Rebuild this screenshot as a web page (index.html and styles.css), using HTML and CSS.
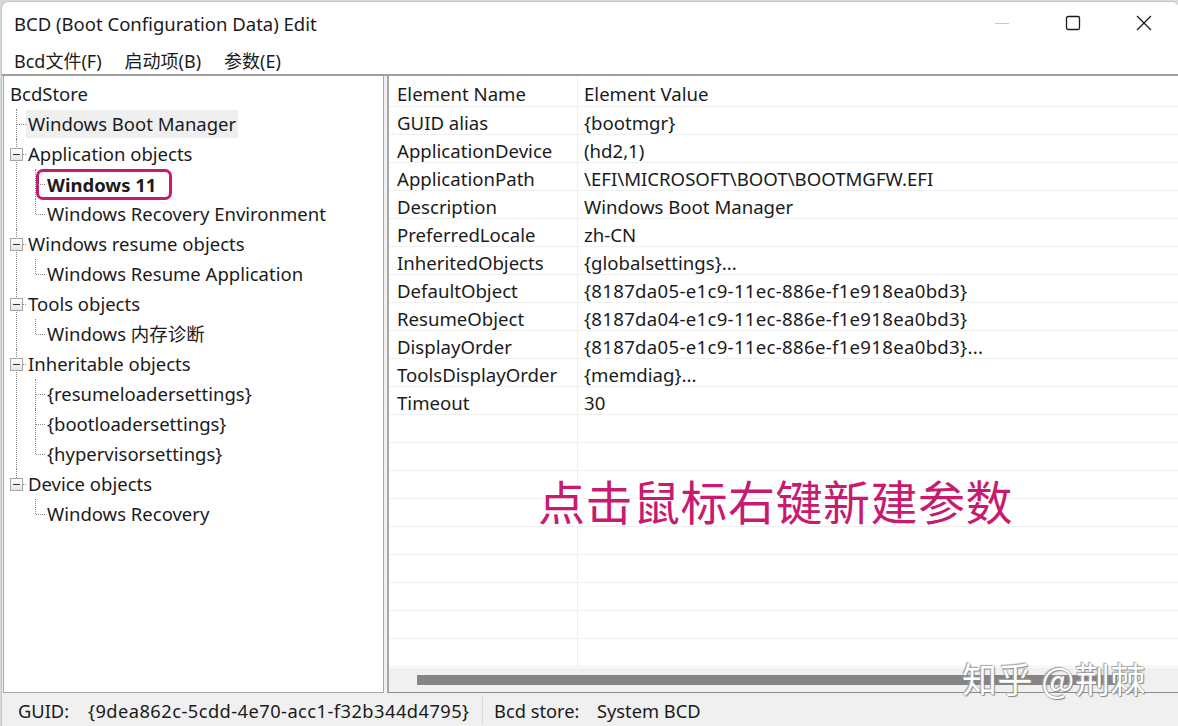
FILE: index.html
```html
<!DOCTYPE html>
<html lang="zh-CN">
<head>
<meta charset="utf-8">
<title>BCD Edit</title>
<link rel="stylesheet" href="styles.css">
</head>
<body>
<div class="window">
  <div class="titlebar">
    <div class="title">BCD (Boot Configuration Data) Edit</div>
    <div class="controls">
      <span class="ctl"><svg width="16" height="16" viewBox="0 0 16 16"><path d="M1 8.5h14" stroke="#c8c8c8" stroke-width="1"/></svg></span>
      <span class="ctl"><svg width="16" height="16" viewBox="0 0 16 16"><rect x="1.5" y="1.5" width="13" height="13" rx="1.5" fill="none" stroke="#1a1a1a" stroke-width="1.3"/></svg></span>
      <span class="ctl"><svg width="16" height="16" viewBox="0 0 16 16"><path d="M1 1L15 15M15 1L1 15" stroke="#1a1a1a" stroke-width="1.3"/></svg></span>
    </div>
  </div>
  <div class="menubar">
    <span class="menu">Bcd文件(F)</span>
    <span class="menu">启动项(B)</span>
    <span class="menu">参数(E)</span>
  </div>
  <div class="main">
    <div class="pane left">
      <div class="tree">
        <div class="root"><span class="label">BcdStore</span></div>
        <ul class="l1">
          <li><span class="label sel">Windows Boot Manager</span></li>
          <li><span class="box"></span><span class="label">Application objects</span>
            <ul class="l2">
              <li><span class="label w11">Windows 11</span></li>
              <li><span class="label">Windows Recovery Environment</span></li>
            </ul>
          </li>
          <li><span class="box"></span><span class="label">Windows resume objects</span>
            <ul class="l2">
              <li><span class="label">Windows Resume Application</span></li>
            </ul>
          </li>
          <li><span class="box"></span><span class="label">Tools objects</span>
            <ul class="l2">
              <li><span class="label">Windows 内存诊断</span></li>
            </ul>
          </li>
          <li><span class="box"></span><span class="label">Inheritable objects</span>
            <ul class="l2">
              <li><span class="label">{resumeloadersettings}</span></li>
              <li><span class="label">{bootloadersettings}</span></li>
              <li><span class="label">{hypervisorsettings}</span></li>
            </ul>
          </li>
          <li><span class="box"></span><span class="label">Device objects</span>
            <ul class="l2">
              <li><span class="label">Windows Recovery</span></li>
            </ul>
          </li>
        </ul>
      </div>
    </div>
    <div class="pane right">
      <div class="grid">
        <div class="row head"><div class="c1">Element Name</div><div class="c2">Element Value</div></div>
        <div class="row"><div class="c1">GUID alias</div><div class="c2">{bootmgr}</div></div>
        <div class="row"><div class="c1">ApplicationDevice</div><div class="c2">(hd2,1)</div></div>
        <div class="row"><div class="c1">ApplicationPath</div><div class="c2">\EFI\MICROSOFT\BOOT\BOOTMGFW.EFI</div></div>
        <div class="row"><div class="c1">Description</div><div class="c2">Windows Boot Manager</div></div>
        <div class="row"><div class="c1">PreferredLocale</div><div class="c2">zh-CN</div></div>
        <div class="row"><div class="c1">InheritedObjects</div><div class="c2">{globalsettings}...</div></div>
        <div class="row"><div class="c1">DefaultObject</div><div class="c2 num">{8187da05-e1c9-11ec-886e-f1e918ea0bd3}</div></div>
        <div class="row"><div class="c1">ResumeObject</div><div class="c2 num">{8187da04-e1c9-11ec-886e-f1e918ea0bd3}</div></div>
        <div class="row"><div class="c1">DisplayOrder</div><div class="c2 num">{8187da05-e1c9-11ec-886e-f1e918ea0bd3}...</div></div>
        <div class="row"><div class="c1">ToolsDisplayOrder</div><div class="c2">{memdiag}...</div></div>
        <div class="row"><div class="c1">Timeout</div><div class="c2">30</div></div>
        <div class="row"><div class="c1"></div><div class="c2"></div></div>
        <div class="row"><div class="c1"></div><div class="c2"></div></div>
        <div class="row"><div class="c1"></div><div class="c2"></div></div>
        <div class="row"><div class="c1"></div><div class="c2"></div></div>
        <div class="row"><div class="c1"></div><div class="c2"></div></div>
        <div class="row"><div class="c1"></div><div class="c2"></div></div>
        <div class="row"><div class="c1"></div><div class="c2"></div></div>
        <div class="row"><div class="c1"></div><div class="c2"></div></div>
        <div class="row last"><div class="c1"></div><div class="c2"></div></div>
      </div>
      <div class="hscroll"><div class="thumb"></div></div>
      <div class="annot">点击鼠标右键新建参数</div>
    </div>
  </div>
  <div class="statusbar">
    <span class="st-label">GUID:</span>
    <span class="st-guid">{9dea862c-5cdd-4e70-acc1-f32b344d4795}</span>
    <span class="st-sep"></span>
    <span class="st-label2">Bcd store:</span>
    <span class="st-val">System BCD</span>
  </div>
  <div class="watermark">知乎 @荆棘</div>
</div>
</body>
</html>
```
FILE: styles.css
```css
* { box-sizing: border-box; }
html, body { margin: 0; padding: 0; }
body {
  width: 1178px;
  height: 726px;
  overflow: hidden;
  background: #d9d9d9;
  font-family: "Noto Sans", "Noto Sans CJK SC", sans-serif;
  color: #1b1b1b;
}
.window {
  position: relative;
  width: 1178px;
  height: 726px;
  margin-left: 1px;
  margin-top: 1px;
  background: #f0f0f0;
  border-top-left-radius: 8px;
  border-top-right-radius: 8px;
  border-top: 1px solid #c4c4c4;
  border-left: 1px solid #c4c4c4;
  display: flex;
  flex-direction: column;
  overflow: hidden;
}
.titlebar {
  height: 42px;
  flex: none;
  background: #fff;
  display: flex;
  align-items: center;
  padding-left: 12px;
}
.title {
  font-size: 18.5px;
  flex: 1;
  padding-top: 1px;
}
.controls {
  display: flex;
  align-items: center;
  padding-right: 27px;
  gap: 55px;
}
.ctl { display: flex; width: 16px; height: 16px; }
.menubar {
  height: 32px;
  flex: none;
  background: #fff;
  display: flex;
  align-items: center;
  padding: 3px 0 0 12px;
  gap: 23px;
  font-size: 18px;
  border-bottom: 2px solid #a0a0a0;
}
.menu { line-height: 24px; }
.main {
  flex: 1;
  display: flex;
  gap: 3px;
  min-height: 0;
  background: #f0f0f0;
  padding-left: 1px;
}
.pane {
  background: #fff;
  position: relative;
  overflow: hidden;
}
.left {
  width: 381px;
  flex: none;
  border-left: 1px solid #a8a8a8;
  border-right: 1px solid #a8a8a8;
  border-bottom: 1px solid #a8a8a8;
}
.right {
  flex: 1;
  border-left: 2px solid #a8a8a8;
  border-bottom: 1px solid #8c8c8c;
  display: flex;
  flex-direction: column;
}
/* tree */
.tree {
  padding-top: 3px;
  font-size: 18.5px;
}
.label {
  display: inline-block;
  height: 28px;
  line-height: 28px;
  margin: 1px 0;
  padding: 0 2px;
  white-space: nowrap;
  vertical-align: top;
}
.root { padding-left: 4px; height: 30px; }
.sel { background: #efefef; }
ul.l1, ul.l2 { list-style: none; margin: 0; padding: 0; }
ul.l1 > li { position: relative; padding-left: 22px; }
ul.l1 > li::before {
  content: "";
  position: absolute;
  left: 12px;
  top: 0;
  bottom: 0;
  border-left: 1px dotted #8a8a8a;
}
ul.l1 > li:last-child::before { bottom: auto; height: 15px; }
ul.l1 > li::after {
  content: "";
  position: absolute;
  left: 13px;
  top: 15px;
  width: 9px;
  border-top: 1px dotted #8a8a8a;
}
ul.l2 > li { position: relative; padding-left: 19px; }
ul.l2 > li::before {
  content: "";
  position: absolute;
  left: 9px;
  top: 0;
  bottom: 0;
  border-left: 1px dotted #8a8a8a;
}
ul.l2 > li:last-child::before { bottom: auto; height: 15px; }
ul.l2 > li::after {
  content: "";
  position: absolute;
  left: 10px;
  top: 15px;
  width: 9px;
  border-top: 1px dotted #8a8a8a;
}
.box {
  position: absolute;
  left: 6px;
  top: 9px;
  width: 13px;
  height: 13px;
  border: 1px solid #a5a5a5;
  background: linear-gradient(#ffffff, #e4e4e4);
  z-index: 1;
}
.box::after {
  content: "";
  position: absolute;
  left: 2px;
  right: 2px;
  top: 5px;
  border-top: 1px solid #333;
}
.w11 {
  font-weight: bold;
  border: 3px solid #c81a6f;
  border-radius: 7px;
  height: 31px;
  line-height: 25px;
  margin: 0 0 -1px -9px;
  padding: 0 13px 0 8px;
}
/* grid */
.grid {
  flex: 1;
  font-size: 18.6px;
  overflow: hidden;
}
.row {
  display: flex;
  height: 28px;
  padding-top: 4px;
  line-height: 24px;
  border-bottom: 1px solid #f0f0f0;
}
.row.head { height: 31px; padding-top: 6px; }
.c1 {
  width: 189px;
  flex: none;
  padding-left: 8px;
  white-space: nowrap;
  position: relative;
}
.c1::after {
  content: "";
  position: absolute;
  right: 0;
  top: -6px;
  bottom: -1px;
  border-right: 1px solid #f0f0f0;
}
.c2 {
  flex: 1;
  padding-left: 6px;
  white-space: nowrap;
}
.num { letter-spacing: 0.3px; }
.hscroll {
  height: 24px;
  flex: none;
  background: #f0f0f0;
  padding: 7px 0 0 28px;
}
.thumb {
  width: 700px;
  height: 10px;
  background: #858585;
}
.annot {
  position: absolute;
  left: 149px;
  top: 396px;
  font-size: 47px;
  line-height: 56px;
  letter-spacing: 0.5px;
  color: #c81a6f;
  font-family: "Noto Sans CJK SC", sans-serif;
  white-space: nowrap;
}
.watermark {
  position: absolute;
  left: 960px;
  top: 654px;
  font-size: 35px;
  line-height: 44px;
  letter-spacing: 0.5px;
  color: #ffffff;
  font-family: "Noto Sans CJK SC", sans-serif;
  text-shadow: 0 0 1px #777, 1px 1px 1px #888, -1px -1px 1px #aaa;
  white-space: nowrap;
}
/* status */
.statusbar {
  height: 34px;
  flex: none;
  background: #f0f0f0;
  display: flex;
  align-items: center;
  font-size: 18.3px;
  padding-left: 16px;
}
.st-label { width: 70px; }
.st-guid { width: 394px; letter-spacing: 0.45px; white-space: nowrap; }
.st-sep {
  width: 1px;
  height: 30px;
  background: #d8d8d8;
  margin-right: 11px;
}
.st-label2 { width: 103px; }
```
